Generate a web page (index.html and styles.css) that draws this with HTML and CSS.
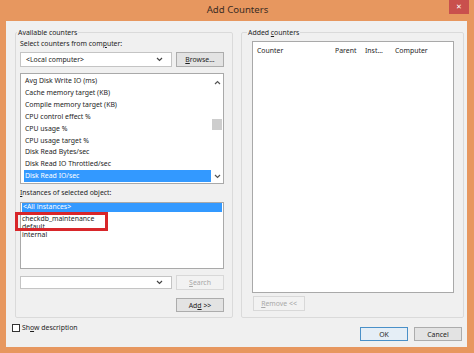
FILE: index.html
```html
<!DOCTYPE html>
<html lang="en">
  <head>
    <meta charset="UTF-8" />
    <title>Add Counters</title>
    <link rel="stylesheet" href="styles.css">
  </head>
  <body>
    <div class="window">
      <div class="titlebar">
        <span></span>
        <span class="title">Add Counters</span>
        <button class="close">&#x2715;</button>
      </div>

      <div class="client">
        <div class="groups">
          <!-- left: counters to pick from -->
          <fieldset class="group available">
            <legend>Available counters</legend>
            <div class="label">Select counters from com<u>p</u>uter:</div>
            <div class="row">
              <div class="combo">
                <span>&lt;Local computer&gt;</span>
                <svg class="chev" width="7" height="5" viewBox="0 0 7 5"><path d="M1 1l2.5 2.5L6 1" fill="none" stroke="#444" stroke-width="1.2"/></svg>
              </div>
              <button class="btn"><u>B</u>rowse...</button>
            </div>

            <div class="listbox counters">
              <ul>
                <li>Avg Disk Write IO (ms)</li>
                <li>Cache memory target (KB)</li>
                <li>Compile memory target (KB)</li>
                <li>CPU control effect %</li>
                <li>CPU usage %</li>
                <li>CPU usage target %</li>
                <li>Disk Read Bytes/sec</li>
                <li>Disk Read IO Throttled/sec</li>
                <li class="selected">Disk Read IO/sec</li>
              </ul>
              <div class="scrollbar">
                <svg width="7" height="5" viewBox="0 0 7 5"><path d="M1 4l2.5-2.5L6 4" fill="none" stroke="#555" stroke-width="1.2"/></svg>
                <div class="track"><div class="thumb"></div></div>
                <svg width="7" height="5" viewBox="0 0 7 5"><path d="M1 1l2.5 2.5L6 1" fill="none" stroke="#555" stroke-width="1.2"/></svg>
              </div>
            </div>

            <div class="label instances-label"><u>I</u>nstances of selected object:</div>
            <div class="listbox instances">
              <ul>
                <li class="selected">&lt;All instances&gt;</li>
                <li class="marked">checkdb_maintenance</li>
                <li>default</li>
                <li>internal</li>
              </ul>
            </div>

            <div class="row search-row">
              <div class="combo">
                <span></span>
                <svg class="chev" width="7" height="5" viewBox="0 0 7 5"><path d="M1 1l2.5 2.5L6 1" fill="none" stroke="#444" stroke-width="1.2"/></svg>
              </div>
              <button class="btn" disabled><u>S</u>earch</button>
            </div>
            <div class="row add-row">
              <button class="btn">Ad<u>d</u> &gt;&gt;</button>
            </div>
          </fieldset>

          <!-- right: counters already added -->
          <fieldset class="group added">
            <legend>Added <u>c</u>ounters</legend>
            <div class="listview">
              <div class="header">
                <span class="col-counter">Counter</span>
                <span class="col-parent">Parent</span>
                <span class="col-inst">Inst...</span>
                <span class="col-computer">Computer</span>
              </div>
            </div>
            <div class="row">
              <button class="btn remove" disabled><u>R</u>emove &lt;&lt;</button>
            </div>
          </fieldset>
        </div>

        <div class="footer">
          <label class="check"><span class="box"></span><span>Sh<u>o</u>w description</span></label>
          <div class="actions">
            <button class="btn default">OK</button>
            <button class="btn">Cancel</button>
          </div>
        </div>
      </div>
    </div>
  </body>
</html>
```

FILE: styles.css
```css
* {
  margin: 0;
  padding: 0;
  box-sizing: border-box;
  font-family: 'Noto Sans', sans-serif;
}

body {
  width: 474px;
  height: 353px;
  overflow: hidden;
}

u {
  text-decoration-thickness: 1px;
  text-underline-offset: 1px;
}

.window {
  width: 474px;
  height: 353px;
  background: #e7975f;
  padding: 0 7px 6px 6px;
  display: flex;
  flex-direction: column;
}

.titlebar {
  height: 21px;
  display: grid;
  grid-template-columns: 1fr auto 1fr;
  align-items: start;
}

.title {
  font-size: 9.6px;
  color: #3a2c24;
  line-height: 20px;
  margin-left: 2px;
}

.close {
  justify-self: end;
  width: 20px;
  height: 14px;
  margin-right: -2px;
  border: none;
  background: #c9504d;
  color: #fff;
  font-size: 7px;
  line-height: 14px;
}

.client {
  flex: 1;
  background: #f0f0f0;
  display: flex;
  flex-direction: column;
  padding: 7px 3px 0 9px;
  font-size: 6.9px;
  color: #1e1e1e;
}

.groups {
  display: flex;
  gap: 8px;
}

.group {
  border: 1px solid #dadada;
  border-radius: 2px;
  height: 290px;
}

.group legend {
  padding: 0 1px;
  font-size: 6.9px;
  line-height: 9px;
}

.available {
  width: 218px;
  padding: 0 8px 0 4px;
}

.available legend {
  margin-left: -3px;
}

.added {
  width: 223px;
  padding: 4px 9px 0 10px;
}

.added legend {
  margin-left: -5px;
}

.label {
  line-height: 10px;
  margin-top: 2px;
}

.row {
  display: flex;
  gap: 4px;
  justify-content: flex-end;
  margin-top: 3px;
}

.combo {
  flex: 1;
  height: 15px;
  background: #fff;
  border: 1px solid #c4c4c4;
  display: flex;
  align-items: center;
  justify-content: space-between;
  padding: 0 8px 0 5px;
}

.btn {
  width: 48px;
  height: 15px;
  background: #e3e3e3;
  border: 1px solid #acacac;
  font-size: 6.9px;
  color: #1e1e1e;
}

.btn:disabled {
  background: #f2f2f2;
  border-color: #d8d8d8;
  color: #a8a8a8;
}

.listbox {
  background: #fff;
  border: 1px solid #a9a9a9;
  display: flex;
  margin-top: 6px;
}

.listbox ul {
  flex: 1;
  list-style: none;
  padding: 1px 0 0 3px;
}

.counters {
  height: 111px;
}

.counters li {
  line-height: 11.9px;
  padding-left: 1px;
}

.selected {
  background: #3399ff;
  color: #fff;
}

.scrollbar {
  width: 12px;
  display: flex;
  flex-direction: column;
  align-items: center;
  padding: 6px 0 4px;
}

.track {
  flex: 1;
  width: 100%;
  padding: 34px 1px 0;
}

.thumb {
  height: 11px;
  background: #cdcdcd;
}

.instances-label {
  margin-top: 4px;
}

.instances {
  height: 67px;
  margin-top: 4px;
}

.instances ul {
  padding: 0 1px;
}

.instances li {
  line-height: 8.6px;
}

.instances .selected {
  line-height: 8.5px;
  padding-left: 1px;
}

/* red annotation box drawn over the list */
.instances .marked {
  position: relative;
  line-height: 9px;
  padding-top: 2px;
}

.marked::after {
  content: "";
  position: absolute;
  left: -7px;
  width: 87px;
  top: 0;
  height: 13px;
  border: 3px solid #d8262a;
}

.search-row {
  margin-top: 6px;
}

.search-row .combo {
  height: 13px;
  margin-top: 1px;
}

.add-row {
  margin-top: 8px;
}

.add-row .btn {
  height: 14px;
}

.listview {
  height: 252px;
  background: #fff;
  border: 1px solid #a9a9a9;
}

.header {
  display: flex;
  height: 16px;
  align-items: center;
  padding-left: 4px;
}

.col-counter {
  width: 78px;
}

.col-parent {
  width: 30px;
}

.col-inst {
  width: 30px;
}

.remove {
  width: 52px;
}

.added .row {
  justify-content: flex-start;
  margin-top: 3px;
  margin-left: 1px;
}

.footer {
  display: flex;
  justify-content: space-between;
  align-items: flex-start;
  padding: 5px 2px 0 0;
  margin-left: -3px;
}

.check {
  display: flex;
  align-items: center;
  gap: 2px;
}

.box {
  width: 8px;
  height: 8px;
  border: 1px solid #333;
  background: #fff;
}

.actions {
  display: flex;
  gap: 6px;
  margin-top: 4px;
}

.actions .btn {
  height: 14px;
}

.btn.default {
  border-color: #4a90c8;
  background: #e5eef6;
}
```
